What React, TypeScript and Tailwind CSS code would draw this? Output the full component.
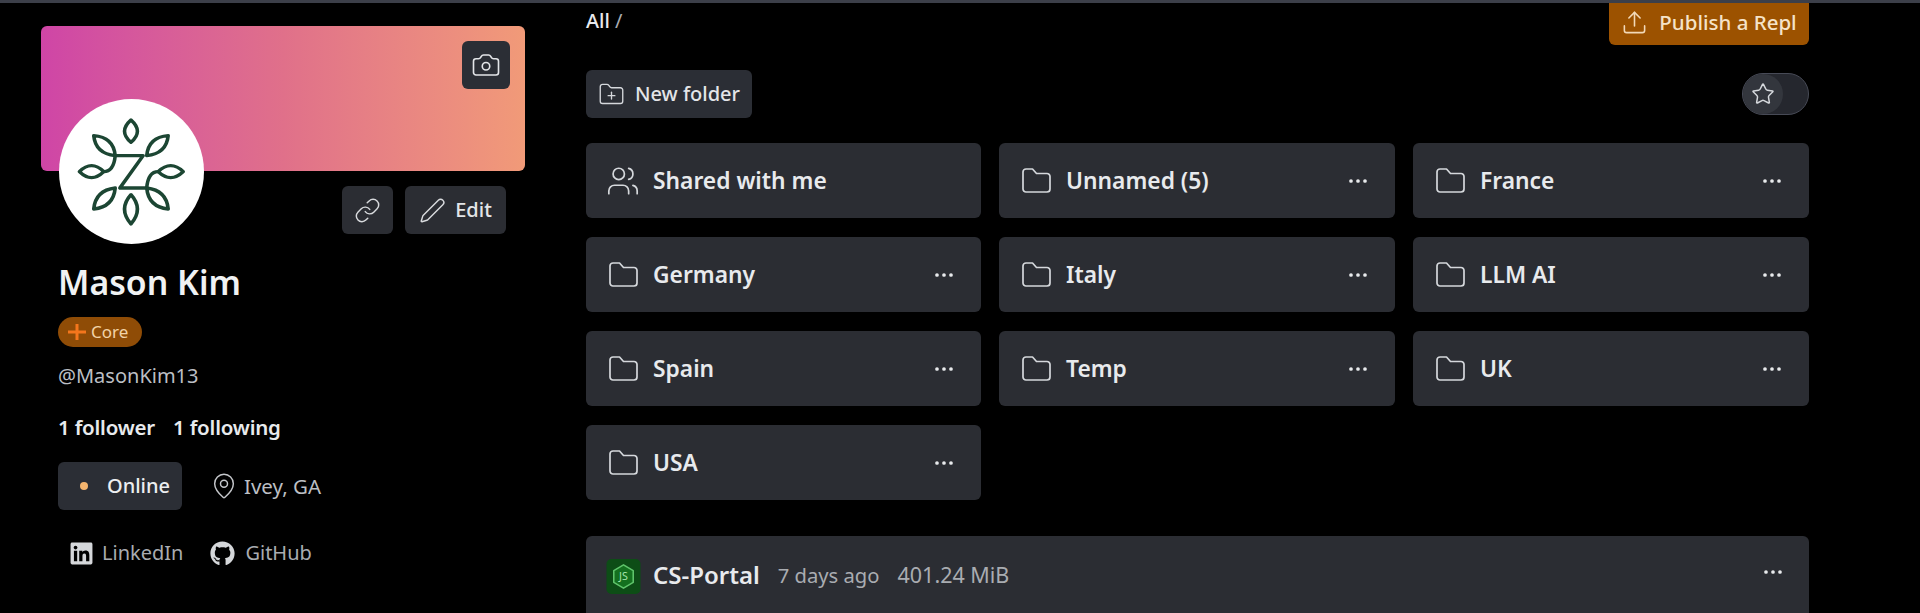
import { Camera, Ellipsis, FolderPlus, Link, MapPin, Pen, Star, Upload, Users } from "lucide-react";
import { FaGithub, FaLinkedin } from "react-icons/fa";

const font = "font-['Noto_Sans',sans-serif]";
const folders = ["Unnamed (5)", "France", "Germany", "Italy", "LLM AI", "Spain", "Temp", "UK", "USA"];

function Logo() {
  return (
    <svg
      viewBox="165 295 405 435"
      preserveAspectRatio="none"
      className="h-full w-full"
      fill="none"
      stroke="#1c4633"
      strokeWidth="10"
      strokeLinejoin="round"
    >
      <path d="M366 358Q330 392 366 425Q402 392 366 358Z" />
      <path d="M366 582Q330 625 366 670Q402 625 366 582Z" />
      <path d="M222 513Q256 477 290 513Q256 549 222 513Z" />
      <path d="M442 513Q477 477 512 513Q477 549 442 513Z" />
      <path d="M262 405Q317 409 322 465Q267 459 262 405Z" />
      <path d="M470 405Q415 409 410 465Q465 459 470 405Z" />
      <path d="M262 625Q267 569 322 562Q317 619 262 625Z" />
      <path d="M470 625Q465 569 410 562Q415 619 470 625Z" />
      <path d="M322 465H400L335 562H410" />
      <path d="M322 465Q318 513 290 513" />
      <path d="M410 562Q414 513 442 513" />
    </svg>
  );
}

function NodeIcon() {
  return (
    <svg viewBox="0 0 35 36" className="h-[35px] w-[35px]">
      <rect width="35" height="36" rx="5" fill="#0d4d16" />
      <path
        d="M17.5 6L27.5 12v12l-10 6L7.5 24V12z"
        fill="#14701f"
        stroke="#5fc46b"
        strokeWidth="1.6"
        strokeLinejoin="round"
      />
      <text x="17.5" y="22" textAnchor="middle" fontSize="11" fill="#a5e3ab" fontFamily="Noto Sans, sans-serif">
        JS
      </text>
    </svg>
  );
}

function FolderIcon() {
  return (
    <svg viewBox="0 0 29 25" className="h-[25px] w-[29px]" fill="none" stroke="#d5d8dc" strokeWidth="1.7" strokeLinejoin="round">
      <path d="M1 4a3 3 0 0 1 3-3h6.5l4 4.5H25a3 3 0 0 1 3 3V21a3 3 0 0 1-3 3H4a3 3 0 0 1-3-3Z" />
    </svg>
  );
}

function FolderCard({ name }: { name: string }) {
  return (
    <div className="flex h-[75px] items-center justify-between rounded-md bg-[#2b2d33] pl-[23px] pr-[25px]">
      <div className="flex items-center gap-[15px]">
        <FolderIcon />
        <span className="pt-[2px] text-[22.8px] font-semibold text-[#e8eaed]">{name}</span>
      </div>
      <Ellipsis size={24} strokeWidth={1.7} className="text-[#eceef0]" />
    </div>
  );
}

export default function App() {
  return (
    <div className={`flex h-[613px] w-[1920px] flex-col overflow-hidden bg-black ${font}`}>
      <div className="h-[3px] shrink-0 bg-[#3c3f49]" />
      <div className="flex min-h-0 flex-1">
        <aside className="w-[586px] shrink-0 pl-[41px] pt-[23px]">
          <div className="relative h-[145px] w-[484px] rounded-md bg-gradient-to-r from-[#cf45a6] via-[#e0708a] to-[#f19a78]">
            <div className="absolute right-[15px] top-[15px] flex h-[48px] w-[48px] items-center justify-center rounded-md bg-[#2b2e35]">
              <Camera size={30} strokeWidth={1.3} className="text-[#e3e5e8]" />
            </div>
            <div className="absolute left-[18px] top-[73px] h-[145px] w-[145px] overflow-hidden rounded-full bg-white">
              <Logo />
            </div>
          </div>
          <div className="mt-[15px] flex w-[484px] justify-end gap-[12px] pr-[19px]">
            <div className="flex h-[48px] w-[51px] items-center justify-center rounded-md bg-[#2b2d33]">
              <Link size={27} strokeWidth={1.3} className="text-[#d8dadd]" />
            </div>
            <div className="flex h-[48px] w-[101px] items-center justify-center gap-[9px] rounded-md bg-[#2b2d33]">
              <Pen size={27} strokeWidth={1.3} className="text-[#d8dadd]" />
              <span className="text-[20px] font-medium text-[#e3e5e8]">Edit</span>
            </div>
          </div>
          <div className="pl-[17px]">
            <h1 className="mt-[26px] text-[33.8px] leading-[44px] font-semibold text-[#f0f2f3]">Mason Kim</h1>
            <div className="mt-[13px] flex h-[30px] w-[84px] items-center gap-[5px] rounded-full bg-[#8f4c06] pl-[10px]">
              <svg viewBox="0 0 18 16" className="h-[16px] w-[18px]">
                <path d="M9 0.5V15.5M0.5 8H17.5" fill="none" stroke="#f4761c" strokeWidth="3" strokeLinecap="round" />
              </svg>
              <span className="text-[17px] text-[#f2d3a8]">Core</span>
            </div>
            <p className="mt-[16px] text-[20px] leading-[25px] text-[#bcbfc4]">@MasonKim13</p>
            <div className="mt-[27px] flex gap-[18px] text-[20.5px] leading-[24px] font-semibold tracking-[-0.2px] text-[#e8eaed]">
              <span>1 follower</span>
              <span>1 following</span>
            </div>
            <div className="mt-[23px] flex items-center">
              <div className="flex h-[48px] w-[124px] items-center rounded-md bg-[#2b2e35] pl-[22px]">
                <span className="h-[8px] w-[8px] rounded-full bg-[#f5b56f]" />
                <span className="ml-[19px] text-[20px] font-medium text-[#eceef0]">Online</span>
              </div>
              <MapPin size={28} strokeWidth={1.25} className="ml-[28px] text-[#c4c6ca]" />
              <span className="ml-[6px] text-[20.5px] text-[#bcbfc4]">Ivey, GA</span>
            </div>
            <div className="mt-[28px] flex items-center pl-[11px] text-[20px] text-[#a9acb1]">
              <FaLinkedin size={25} className="text-[#d5d7da]" />
              <span className="ml-[8px]">LinkedIn</span>
              <FaGithub size={25} className="ml-[27px] text-[#d5d7da]" />
              <span className="ml-[10px]">GitHub</span>
            </div>
          </div>
        </aside>
        <main className="w-[1223px] shrink-0">
          <div className="flex h-[42px] items-start justify-between">
            <span className="text-[20px] leading-[36px] font-medium text-[#e8eaed]">
              All <span className="font-normal text-[#a9acb1]">/</span>
            </span>
            <div className="flex h-[42px] w-[200px] items-center justify-center gap-[11px] rounded-b-md bg-[#9c5200] pb-[3px]">
              <Upload size={27} strokeWidth={1.4} className="text-[#f2d9b8]" />
              <span className="text-[20.5px] font-medium text-[#f5e3c8]">Publish a Repl</span>
            </div>
          </div>
          <div className="mt-[25px] flex items-center justify-between">
            <div className="flex h-[48px] w-[166px] items-center gap-[10px] rounded-md bg-[#2b2e35] pl-[12px]">
              <FolderPlus size={27} strokeWidth={1.2} className="text-[#d5d8dc]" />
              <span className="text-[20px] font-medium text-[#e3e5e8]">New folder</span>
            </div>
            <div className="flex h-[42px] w-[67px] items-center rounded-full border border-[#474a56] bg-[#25272e]">
              <div className="flex h-[40px] w-[40px] items-center justify-center rounded-full bg-[#33363d]">
                <Star size={24} strokeWidth={1.5} className="text-[#d5d8dc]" />
              </div>
            </div>
          </div>
          <div className="mt-[25px] grid grid-cols-[395px_396px_1fr] gap-x-[18px] gap-y-[19px]">
            <div className="flex h-[75px] items-center rounded-md bg-[#2b2d33] pl-[20px]">
              <Users size={34} strokeWidth={1.2} className="text-[#d5d8dc]" />
              <span className="ml-[13px] pt-[2px] text-[22.8px] font-semibold text-[#e8eaed]">Shared with me</span>
            </div>
            {folders.map((name) => (
              <FolderCard key={name} name={name} />
            ))}
          </div>
          <div className="mt-[36px] flex h-[100px] items-start justify-between rounded-t-md bg-[#2b2d33] pl-[20px] pr-[24px] pt-[21px]">
            <div className="flex items-center">
              <NodeIcon />
              <span className="ml-[12px] pb-[2px] text-[24px] font-semibold text-[#e8eaed]">CS-Portal</span>
              <span className="ml-[18px] pb-[1px] text-[20.2px] text-[#a9acb1]">7 days ago</span>
              <span className="ml-[18px] pb-[1px] text-[21.5px] text-[#a9acb1]">401.24 MiB</span>
            </div>
            <Ellipsis size={24} strokeWidth={1.7} className="mt-[3px] text-[#eceef0]" />
          </div>
        </main>
      </div>
    </div>
  );
}
